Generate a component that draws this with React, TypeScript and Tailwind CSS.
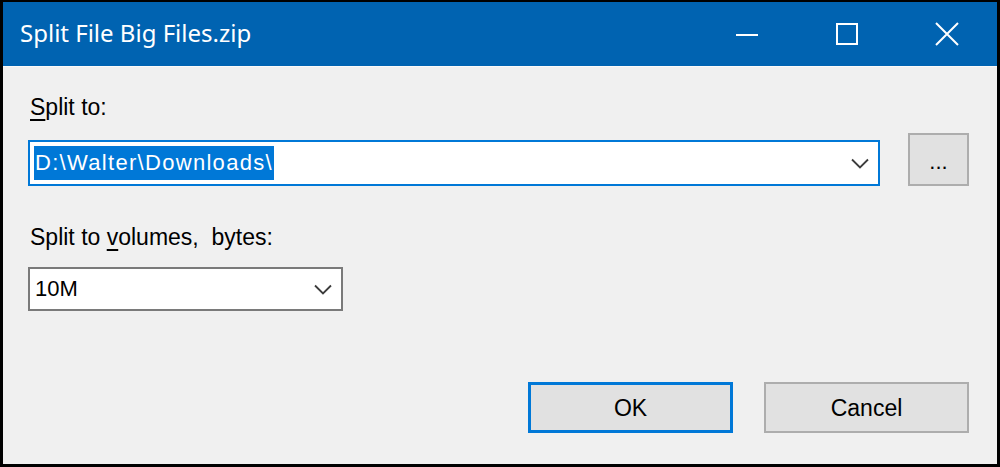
import React from "react";

const Chevron: React.FC = () => (
  <svg width="18" height="11" viewBox="0 0 18 11" fill="none">
    <path d="M1 1.5 L9 9.5 L17 1.5" stroke="#3c3c3c" strokeWidth="1.8" />
  </svg>
);

const App: React.FC = () => {
  return (
    <div
      className="w-[1000px] h-[467px] bg-black pt-[2px] px-[3px] pb-[3px] flex flex-col"
      style={{ fontFamily: '"Liberation Sans", Arial, sans-serif' }}
    >
      {/* title bar */}
      <div className="h-[64px] bg-[#0063b1] flex items-center text-white shrink-0">
        <div
          className="pl-[17px] flex-1 text-[24px] leading-[30px] pb-[2px]"
          style={{ fontFamily: '"Noto Sans", "Open Sans", sans-serif' }}
        >
          Split File Big Files.zip
        </div>
        <div className="w-[100px] h-full flex items-center justify-center">
          <div className="w-[22px] h-[2px] bg-white mt-[1px]" />
        </div>
        <div className="w-[100px] h-full flex items-center justify-center">
          <div className="w-[22px] h-[22px] border-2 border-white mb-[1px]" />
        </div>
        <div className="w-[100px] h-full flex items-center justify-center">
          <svg width="24" height="24" viewBox="0 0 24 24" className="mb-[1px]">
            <path d="M1 1 L23 23 M23 1 L1 23" stroke="white" strokeWidth="2" />
          </svg>
        </div>
      </div>

      {/* body */}
      <div className="flex-1 bg-[#f0f0f0] border-t border-[#f9f9f9] pl-[25px] pr-[28px] flex flex-col text-black">
        <div className="mt-[27px] ml-[2px] text-[23px] leading-[26px]">
          <span className="underline underline-offset-[4px] decoration-[1.5px]">S</span>plit to:
        </div>

        <div className="mt-[13px] flex items-end gap-[28px]">
          <div className="w-[852px] h-[46px] border-2 border-[#0078d7] bg-white flex items-center pl-[4px] pr-[9px]">
            <span className="bg-[#0078d7] text-white text-[22px] leading-[34px] px-[1px] tracking-[1.3px]">
              D:\Walter\Downloads\
            </span>
            <div className="flex-1" />
            <Chevron />
          </div>
          <div className="w-[61px] h-[53px] border-2 border-[#adadad] bg-[#e1e1e1] flex items-center justify-center text-[22px] leading-[26px] pt-[4px]">
            ...
          </div>
        </div>

        <div className="mt-[38px] ml-[2px] text-[23px] leading-[26px]">
          Split to <span className="underline underline-offset-[4px] decoration-[1.5px]">v</span>olumes,&nbsp; bytes:
        </div>

        <div className="mt-[17px] w-[315px] h-[44px] border-2 border-[#7a7a7a] bg-white flex items-center pl-[5px] pr-[9px] text-[22px] leading-[26px]">
          <span>10M</span>
          <div className="flex-1" />
          <Chevron />
        </div>

        <div className="mt-[71px] flex justify-end gap-[31px]">
          <div className="w-[205px] h-[51px] border-[3px] border-[#0078d7] bg-[#e1e1e1] flex items-center justify-center text-[23px] leading-[26px]">
            OK
          </div>
          <div className="w-[205px] h-[51px] border-2 border-[#adadad] bg-[#e1e1e1] flex items-center justify-center text-[23px] leading-[26px]">
            Cancel
          </div>
        </div>
      </div>
    </div>
  );
};

export default App;
